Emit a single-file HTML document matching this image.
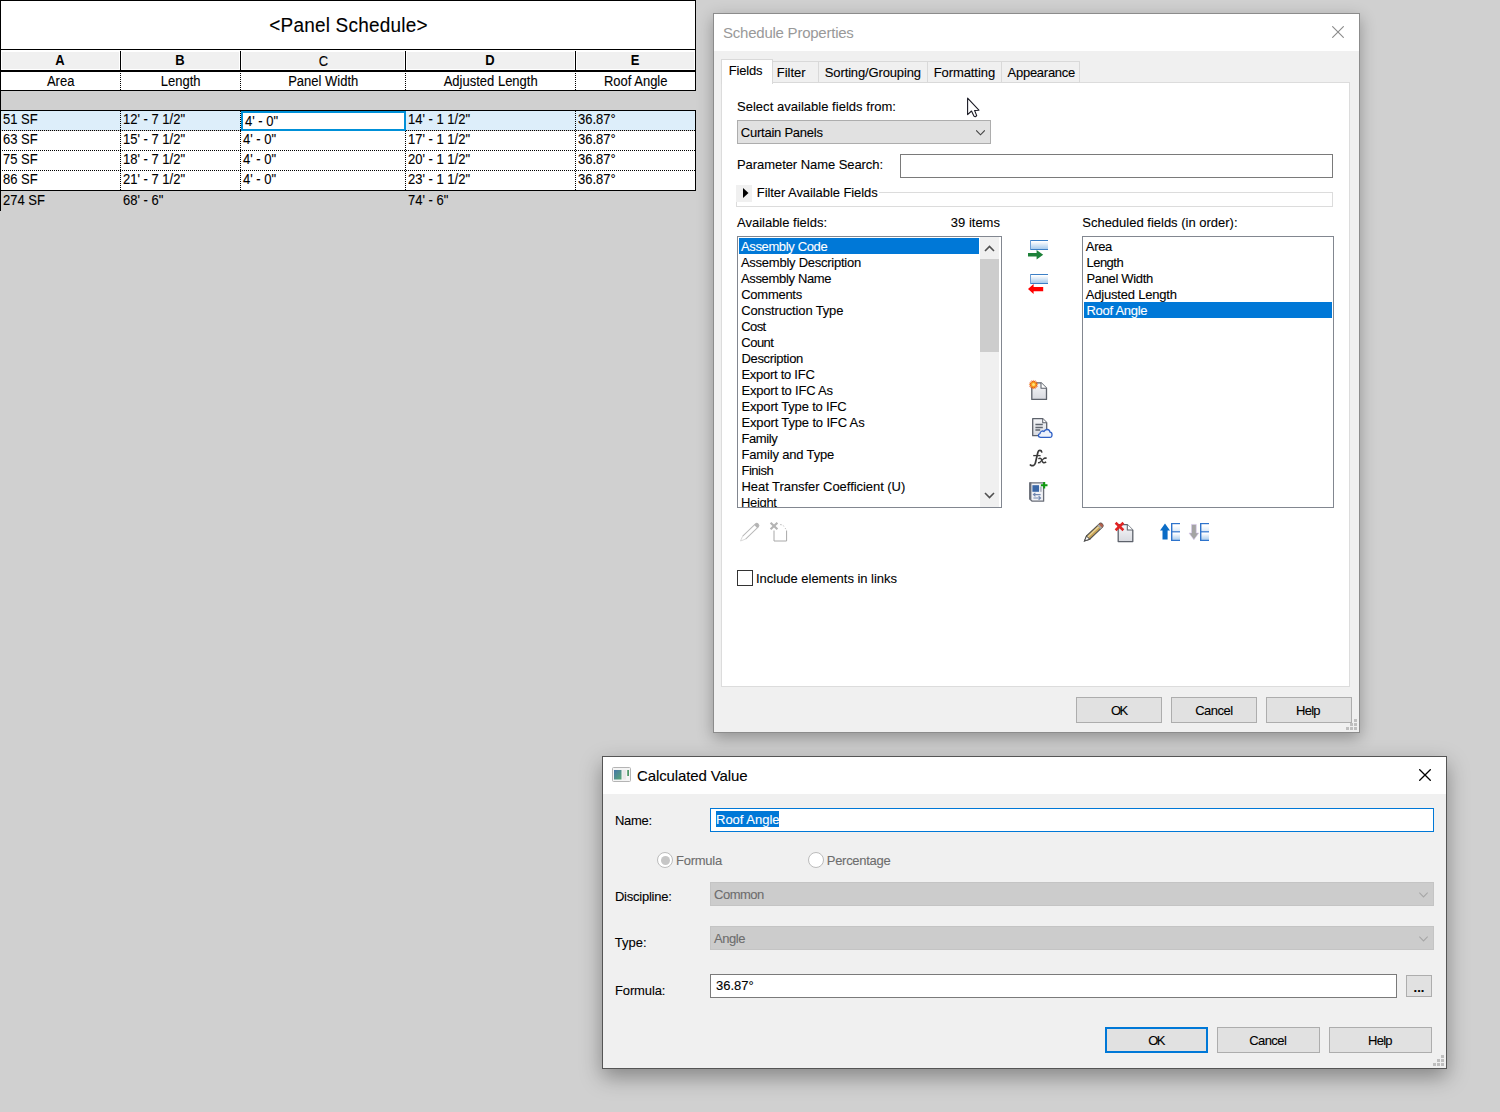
<!DOCTYPE html>
<html><head><meta charset="utf-8"><title>Schedule Properties</title>
<style>
html,body{margin:0;padding:0;}
body{width:1500px;height:1112px;overflow:hidden;background:#d0d0d0;font-family:"Liberation Sans", sans-serif;font-size:13px;position:relative;}
div,span.t,svg{position:absolute;box-sizing:border-box;}
span.t{display:block;-webkit-text-stroke:0.1px currentColor;}
</style></head>
<body>
<div style="left:0px;top:0px;width:696px;height:50px;background:#fff;border:1px solid #000;"></div>
<span class="t" style="top:15px;font-size:19px;color:#000;white-space:pre;line-height:normal;letter-spacing:0.200px;left:348.5px;transform-origin:50% 17px;transform:translateX(-50%) scaleY(1.08);">&lt;Panel Schedule&gt;</span>
<div style="left:1px;top:50px;width:695px;height:20px;background:#fff;"></div>
<div style="left:2px;top:52px;width:117px;height:17px;background:#f0f0f0;"></div>
<div style="left:122px;top:52px;width:117px;height:17px;background:#f0f0f0;"></div>
<div style="left:242px;top:52px;width:162px;height:17px;background:#f0f0f0;"></div>
<div style="left:407px;top:52px;width:167px;height:17px;background:#f0f0f0;"></div>
<div style="left:577px;top:52px;width:117px;height:17px;background:#f0f0f0;"></div>
<div style="left:120px;top:51px;width:1px;height:19px;background:#000;"></div>
<div style="left:240px;top:51px;width:1px;height:19px;background:#000;"></div>
<div style="left:405px;top:51px;width:1px;height:19px;background:#000;"></div>
<div style="left:575px;top:51px;width:1px;height:19px;background:#000;"></div>
<div style="left:695px;top:51px;width:1px;height:19px;background:#000;"></div>
<div style="left:0px;top:70px;width:696px;height:2px;background:#000;"></div>
<div style="left:1px;top:72px;width:694px;height:18px;background:#fff;"></div>
<div style="left:120px;top:73px;width:1px;height:17px;background:repeating-linear-gradient(180deg,#000 0 1px,transparent 1px 2px);background-position:0 0px;"></div>
<div style="left:240px;top:73px;width:1px;height:17px;background:repeating-linear-gradient(180deg,#000 0 1px,transparent 1px 2px);background-position:0 0px;"></div>
<div style="left:405px;top:73px;width:1px;height:17px;background:repeating-linear-gradient(180deg,#000 0 1px,transparent 1px 2px);background-position:0 0px;"></div>
<div style="left:575px;top:73px;width:1px;height:17px;background:repeating-linear-gradient(180deg,#000 0 1px,transparent 1px 2px);background-position:0 0px;"></div>
<div style="left:695px;top:50px;width:1px;height:41px;background:#000;"></div>
<div style="left:0px;top:90px;width:696px;height:1px;background:#000;"></div>
<div style="left:0px;top:110px;width:696px;height:1px;background:#000;"></div>
<div style="left:1px;top:111px;width:694px;height:19px;background:#ddeefa;"></div>
<div style="left:1px;top:131px;width:694px;height:59px;background:#fff;"></div>
<div style="left:2px;top:130px;width:693px;height:1px;background:repeating-linear-gradient(90deg,#000 0 1px,transparent 1px 2px);background-position:0px 0;"></div>
<div style="left:2px;top:150px;width:693px;height:1px;background:repeating-linear-gradient(90deg,#000 0 1px,transparent 1px 2px);background-position:0px 0;"></div>
<div style="left:2px;top:170px;width:693px;height:1px;background:repeating-linear-gradient(90deg,#000 0 1px,transparent 1px 2px);background-position:0px 0;"></div>
<div style="left:120px;top:111px;width:1px;height:79px;background:repeating-linear-gradient(180deg,#000 0 1px,transparent 1px 2px);background-position:0 0px;"></div>
<div style="left:240px;top:111px;width:1px;height:79px;background:repeating-linear-gradient(180deg,#000 0 1px,transparent 1px 2px);background-position:0 0px;"></div>
<div style="left:405px;top:111px;width:1px;height:79px;background:repeating-linear-gradient(180deg,#000 0 1px,transparent 1px 2px);background-position:0 0px;"></div>
<div style="left:575px;top:111px;width:1px;height:79px;background:repeating-linear-gradient(180deg,#000 0 1px,transparent 1px 2px);background-position:0 0px;"></div>
<div style="left:0px;top:190px;width:696px;height:1px;background:#000;"></div>
<div style="left:695px;top:110px;width:1px;height:81px;background:#000;"></div>
<div style="left:0px;top:0px;width:1px;height:211px;background:#000;"></div>
<div style="left:241px;top:111px;width:165px;height:20px;background:#fff;border:2px solid #0090d8;"></div>
<span class="t" style="top:53px;font-size:13px;color:#000;white-space:pre;line-height:normal;font-weight:bold;left:60.0px;transform-origin:50% 12px;transform:translateX(-50%) scaleY(1.08);-webkit-text-stroke:0;">A</span>
<span class="t" style="top:74px;font-size:13px;color:#000;white-space:pre;line-height:normal;left:60.7px;transform-origin:50% 12px;transform:translateX(-50%) scaleY(1.08);">Area</span>
<span class="t" style="top:53px;font-size:13px;color:#000;white-space:pre;line-height:normal;font-weight:bold;left:180.0px;transform-origin:50% 12px;transform:translateX(-50%) scaleY(1.08);-webkit-text-stroke:0;">B</span>
<span class="t" style="top:74px;font-size:13px;color:#000;white-space:pre;line-height:normal;left:180.7px;transform-origin:50% 12px;transform:translateX(-50%) scaleY(1.08);">Length</span>
<span class="t" style="top:54px;font-size:13px;color:#000;white-space:pre;line-height:normal;left:323.5px;transform-origin:50% 12px;transform:translateX(-50%) scaleY(1.08);">C</span>
<span class="t" style="top:74px;font-size:13px;color:#000;white-space:pre;line-height:normal;left:323.2px;transform-origin:50% 12px;transform:translateX(-50%) scaleY(1.08);">Panel Width</span>
<span class="t" style="top:53px;font-size:13px;color:#000;white-space:pre;line-height:normal;font-weight:bold;left:490.0px;transform-origin:50% 12px;transform:translateX(-50%) scaleY(1.08);-webkit-text-stroke:0;">D</span>
<span class="t" style="top:74px;font-size:13px;color:#000;white-space:pre;line-height:normal;left:490.7px;transform-origin:50% 12px;transform:translateX(-50%) scaleY(1.08);">Adjusted Length</span>
<span class="t" style="top:53px;font-size:13px;color:#000;white-space:pre;line-height:normal;font-weight:bold;left:635.0px;transform-origin:50% 12px;transform:translateX(-50%) scaleY(1.08);-webkit-text-stroke:0;">E</span>
<span class="t" style="top:74px;font-size:13px;color:#000;white-space:pre;line-height:normal;left:635.7px;transform-origin:50% 12px;transform:translateX(-50%) scaleY(1.08);">Roof Angle</span>
<span class="t" style="top:112px;font-size:13px;color:#000;white-space:pre;line-height:normal;left:3px;transform-origin:50% 12px;transform:scaleY(1.09);">51 SF</span>
<span class="t" style="top:112px;font-size:13px;color:#000;white-space:pre;line-height:normal;left:123px;transform-origin:50% 12px;transform:scaleY(1.09);">12' - 7 1/2"</span>
<span class="t" style="top:114px;font-size:13px;color:#000;white-space:pre;line-height:normal;left:245px;transform-origin:50% 12px;transform:scaleY(1.09);">4' - 0"</span>
<span class="t" style="top:112px;font-size:13px;color:#000;white-space:pre;line-height:normal;left:408px;transform-origin:50% 12px;transform:scaleY(1.09);">14' - 1 1/2"</span>
<span class="t" style="top:112px;font-size:13px;color:#000;white-space:pre;line-height:normal;left:578px;transform-origin:50% 12px;transform:scaleY(1.09);">36.87°</span>
<span class="t" style="top:132px;font-size:13px;color:#000;white-space:pre;line-height:normal;left:3px;transform-origin:50% 12px;transform:scaleY(1.09);">63 SF</span>
<span class="t" style="top:132px;font-size:13px;color:#000;white-space:pre;line-height:normal;left:123px;transform-origin:50% 12px;transform:scaleY(1.09);">15' - 7 1/2"</span>
<span class="t" style="top:132px;font-size:13px;color:#000;white-space:pre;line-height:normal;left:243px;transform-origin:50% 12px;transform:scaleY(1.09);">4' - 0"</span>
<span class="t" style="top:132px;font-size:13px;color:#000;white-space:pre;line-height:normal;left:408px;transform-origin:50% 12px;transform:scaleY(1.09);">17' - 1 1/2"</span>
<span class="t" style="top:132px;font-size:13px;color:#000;white-space:pre;line-height:normal;left:578px;transform-origin:50% 12px;transform:scaleY(1.09);">36.87°</span>
<span class="t" style="top:152px;font-size:13px;color:#000;white-space:pre;line-height:normal;left:3px;transform-origin:50% 12px;transform:scaleY(1.09);">75 SF</span>
<span class="t" style="top:152px;font-size:13px;color:#000;white-space:pre;line-height:normal;left:123px;transform-origin:50% 12px;transform:scaleY(1.09);">18' - 7 1/2"</span>
<span class="t" style="top:152px;font-size:13px;color:#000;white-space:pre;line-height:normal;left:243px;transform-origin:50% 12px;transform:scaleY(1.09);">4' - 0"</span>
<span class="t" style="top:152px;font-size:13px;color:#000;white-space:pre;line-height:normal;left:408px;transform-origin:50% 12px;transform:scaleY(1.09);">20' - 1 1/2"</span>
<span class="t" style="top:152px;font-size:13px;color:#000;white-space:pre;line-height:normal;left:578px;transform-origin:50% 12px;transform:scaleY(1.09);">36.87°</span>
<span class="t" style="top:172px;font-size:13px;color:#000;white-space:pre;line-height:normal;left:3px;transform-origin:50% 12px;transform:scaleY(1.09);">86 SF</span>
<span class="t" style="top:172px;font-size:13px;color:#000;white-space:pre;line-height:normal;left:123px;transform-origin:50% 12px;transform:scaleY(1.09);">21' - 7 1/2"</span>
<span class="t" style="top:172px;font-size:13px;color:#000;white-space:pre;line-height:normal;left:243px;transform-origin:50% 12px;transform:scaleY(1.09);">4' - 0"</span>
<span class="t" style="top:172px;font-size:13px;color:#000;white-space:pre;line-height:normal;left:408px;transform-origin:50% 12px;transform:scaleY(1.09);">23' - 1 1/2"</span>
<span class="t" style="top:172px;font-size:13px;color:#000;white-space:pre;line-height:normal;left:578px;transform-origin:50% 12px;transform:scaleY(1.09);">36.87°</span>
<span class="t" style="top:193px;font-size:13px;color:#000;white-space:pre;line-height:normal;left:3px;transform-origin:50% 12px;transform:scaleY(1.09);">274 SF</span>
<span class="t" style="top:193px;font-size:13px;color:#000;white-space:pre;line-height:normal;left:123px;transform-origin:50% 12px;transform:scaleY(1.09);">68' - 6"</span>
<span class="t" style="top:193px;font-size:13px;color:#000;white-space:pre;line-height:normal;left:408px;transform-origin:50% 12px;transform:scaleY(1.09);">74' - 6"</span>
<div style="left:713px;top:13px;width:647px;height:720px;background:#f0f0f0;border:1px solid #8c8c8c;box-shadow:0 5px 15px 0 rgba(0,0,0,.30);"></div>
<div style="left:714px;top:14px;width:645px;height:37px;background:#fff;"></div>
<span class="t" style="top:24px;font-size:15px;color:#999999;white-space:pre;line-height:normal;letter-spacing:-0.239px;left:723.05px;-webkit-text-stroke:0;">Schedule Properties</span>
<svg style="left:1332px;top:26px;width:12px;height:12px" viewBox="0 0 12 12"><path d="M0.3 0.3L11.7 11.7M11.7 0.3L0.3 11.7" stroke="#8a8a8a" stroke-width="1.1" fill="none"/></svg>
<div style="left:721px;top:82px;width:629px;height:605px;background:#fff;border:1px solid #dcdcdc;"></div>
<div style="left:772px;top:61px;width:47px;height:22px;background:#f0f0f0;border:1px solid #d9d9d9;"></div>
<span class="t" style="top:65px;font-size:13px;color:#000;white-space:pre;line-height:normal;letter-spacing:-0.046px;left:776.85px;">Filter</span>
<div style="left:818px;top:61px;width:110px;height:22px;background:#f0f0f0;border:1px solid #d9d9d9;"></div>
<span class="t" style="top:65px;font-size:13px;color:#000;white-space:pre;line-height:normal;letter-spacing:-0.140px;left:824.85px;">Sorting/Grouping</span>
<div style="left:927px;top:61px;width:75px;height:22px;background:#f0f0f0;border:1px solid #d9d9d9;"></div>
<span class="t" style="top:65px;font-size:13px;color:#000;white-space:pre;line-height:normal;letter-spacing:-0.073px;left:933.65px;">Formatting</span>
<div style="left:1001px;top:61px;width:79px;height:22px;background:#f0f0f0;border:1px solid #d9d9d9;"></div>
<span class="t" style="top:65px;font-size:13px;color:#000;white-space:pre;line-height:normal;letter-spacing:-0.263px;left:1007.55px;">Appearance</span>
<div style="left:721px;top:59px;width:52px;height:25px;background:#fff;border:1px solid #d9d9d9;border-bottom:none;"></div>
<span class="t" style="top:63px;font-size:13px;color:#000;white-space:pre;line-height:normal;letter-spacing:-0.205px;left:728.85px;">Fields</span>
<span class="t" style="top:99px;font-size:13px;color:#000;white-space:pre;line-height:normal;letter-spacing:0.026px;left:737px;">Select available fields from:</span>
<div style="left:737px;top:120px;width:254px;height:24px;background:#e1e1e1;border:1px solid #adadad;"></div>
<span class="t" style="top:125px;font-size:13px;color:#000;white-space:pre;line-height:normal;letter-spacing:-0.240px;left:740.85px;">Curtain Panels</span>
<svg style="left:976px;top:130px;width:9px;height:6px" viewBox="0 0 9 6"><path d="M0.2 0.4L4.5 4.8L8.8 0.4" stroke="#444" stroke-width="1.1" fill="none"/></svg>
<span class="t" style="top:157px;font-size:13px;color:#000;white-space:pre;line-height:normal;letter-spacing:-0.064px;left:737px;">Parameter Name Search:</span>
<div style="left:900px;top:154px;width:433px;height:24px;background:#fff;border:1px solid #7a7a7a;"></div>
<div style="left:736px;top:192px;width:597px;height:15px;border:1px solid #dcdcdc;"></div>
<div style="left:736px;top:185px;width:16px;height:17px;background:#f0f0f0;"></div>
<div style="left:752px;top:185px;width:127px;height:17px;background:#fff;"></div>
<svg style="left:743px;top:188px;width:6px;height:10px" viewBox="0 0 6 10"><path d="M0 0L5.5 5L0 10Z" fill="#000"/></svg>
<span class="t" style="top:185px;font-size:13px;color:#000;white-space:pre;line-height:normal;letter-spacing:-0.079px;left:756.85px;">Filter Available Fields</span>
<span class="t" style="top:215px;font-size:13px;color:#000;white-space:pre;line-height:normal;letter-spacing:-0.006px;left:737px;">Available fields:</span>
<span class="t" style="top:215px;font-size:13px;color:#000;white-space:pre;line-height:normal;letter-spacing:-0.004px;left:950.85px;">39 items</span>
<span class="t" style="top:215px;font-size:13px;color:#000;white-space:pre;line-height:normal;letter-spacing:-0.002px;left:1082.25px;">Scheduled fields (in order):</span>
<div style="left:737px;top:236px;width:265px;height:272px;background:#fff;border:1px solid #828790;overflow:hidden;"></div>
<div style="left:739px;top:238px;width:240px;height:16px;background:#0078d7;"></div>
<span class="t" style="top:239px;font-size:13px;color:#fff;white-space:pre;line-height:normal;letter-spacing:-0.362px;left:740.95px;">Assembly Code</span>
<span class="t" style="top:255px;font-size:13px;color:#000;white-space:pre;line-height:normal;letter-spacing:-0.250px;left:740.95px;">Assembly Description</span>
<span class="t" style="top:271px;font-size:13px;color:#000;white-space:pre;line-height:normal;letter-spacing:-0.333px;left:740.95px;">Assembly Name</span>
<span class="t" style="top:287px;font-size:13px;color:#000;white-space:pre;line-height:normal;letter-spacing:-0.273px;left:741.25px;">Comments</span>
<span class="t" style="top:303px;font-size:13px;color:#000;white-space:pre;line-height:normal;letter-spacing:-0.147px;left:741.25px;">Construction Type</span>
<span class="t" style="top:319px;font-size:13px;color:#000;white-space:pre;line-height:normal;letter-spacing:-0.613px;left:741.25px;">Cost</span>
<span class="t" style="top:335px;font-size:13px;color:#000;white-space:pre;line-height:normal;letter-spacing:-0.492px;left:741.25px;">Count</span>
<span class="t" style="top:351px;font-size:13px;color:#000;white-space:pre;line-height:normal;letter-spacing:-0.318px;left:741.45px;">Description</span>
<span class="t" style="top:367px;font-size:13px;color:#000;white-space:pre;line-height:normal;letter-spacing:-0.271px;left:741.45px;">Export to IFC</span>
<span class="t" style="top:383px;font-size:13px;color:#000;white-space:pre;line-height:normal;letter-spacing:-0.202px;left:741.45px;">Export to IFC As</span>
<span class="t" style="top:399px;font-size:13px;color:#000;white-space:pre;line-height:normal;letter-spacing:-0.168px;left:741.45px;">Export Type to IFC</span>
<span class="t" style="top:415px;font-size:13px;color:#000;white-space:pre;line-height:normal;letter-spacing:-0.150px;left:741.45px;">Export Type to IFC As</span>
<span class="t" style="top:431px;font-size:13px;color:#000;white-space:pre;line-height:normal;letter-spacing:-0.409px;left:741.45px;">Family</span>
<span class="t" style="top:447px;font-size:13px;color:#000;white-space:pre;line-height:normal;letter-spacing:-0.161px;left:741.45px;">Family and Type</span>
<span class="t" style="top:463px;font-size:13px;color:#000;white-space:pre;line-height:normal;letter-spacing:-0.472px;left:741.45px;">Finish</span>
<span class="t" style="top:479px;font-size:13px;color:#000;white-space:pre;line-height:normal;letter-spacing:-0.050px;left:741.45px;">Heat Transfer Coefficient (U)</span>
<div style="left:739px;top:494px;width:120px;height:13px;overflow:hidden;"><span style="position:absolute;left:2px;top:1px;font-size:13px;line-height:normal;white-space:pre;letter-spacing:-0.33px;">Height</span></div>
<div style="left:980px;top:237px;width:21px;height:270px;background:#f0f0f0;"></div>
<div style="left:980px;top:259px;width:19px;height:93px;background:#cdcdcd;"></div>
<div style="left:999px;top:237px;width:2px;height:270px;background:#fff;"></div>
<svg style="left:984px;top:245px;width:11px;height:7px" viewBox="0 0 11 7"><path d="M1 6L5.5 1.5L10 6" stroke="#505050" stroke-width="1.6" fill="none"/></svg>
<svg style="left:984px;top:492px;width:11px;height:7px" viewBox="0 0 11 7"><path d="M1 1L5.5 5.5L10 1" stroke="#505050" stroke-width="1.6" fill="none"/></svg>
<div style="left:1082px;top:236px;width:252px;height:272px;background:#fff;border:1px solid #828790;"></div>
<div style="left:1084px;top:302px;width:248px;height:16px;background:#0078d7;"></div>
<span class="t" style="top:239px;font-size:13px;color:#000;white-space:pre;line-height:normal;letter-spacing:-0.351px;left:1085.85px;">Area</span>
<span class="t" style="top:255px;font-size:13px;color:#000;white-space:pre;line-height:normal;letter-spacing:-0.509px;left:1086.45px;">Length</span>
<span class="t" style="top:271px;font-size:13px;color:#000;white-space:pre;line-height:normal;letter-spacing:-0.330px;left:1086.45px;">Panel Width</span>
<span class="t" style="top:287px;font-size:13px;color:#000;white-space:pre;line-height:normal;letter-spacing:-0.200px;left:1085.85px;">Adjusted Length</span>
<span class="t" style="top:303px;font-size:13px;color:#fff;white-space:pre;line-height:normal;letter-spacing:-0.283px;left:1086.45px;">Roof Angle</span>
<div style="left:737px;top:570px;width:16px;height:16px;background:#fff;border:1px solid #333;"></div>
<span class="t" style="top:571px;font-size:13px;color:#000;white-space:pre;line-height:normal;letter-spacing:-0.026px;left:756px;">Include elements in links</span>
<div style="left:1076px;top:697px;width:86px;height:26px;background:#e1e1e1;border:1px solid #adadad;"></div>
<span class="t" style="top:703px;font-size:13px;color:#000;white-space:pre;line-height:normal;letter-spacing:-1.582px;left:1110.95px;">OK</span>
<div style="left:1171px;top:697px;width:86px;height:26px;background:#e1e1e1;border:1px solid #adadad;"></div>
<span class="t" style="top:703px;font-size:13px;color:#000;white-space:pre;line-height:normal;letter-spacing:-0.517px;left:1195.15px;">Cancel</span>
<div style="left:1266px;top:697px;width:86px;height:26px;background:#e1e1e1;border:1px solid #adadad;"></div>
<span class="t" style="top:703px;font-size:13px;color:#000;white-space:pre;line-height:normal;letter-spacing:-0.690px;left:1295.95px;">Help</span>
<div style="left:602px;top:756px;width:845px;height:313px;background:#f0f0f0;border:1px solid #555;box-shadow:0 8px 20px 0 rgba(0,0,0,.36);"></div>
<div style="left:603px;top:757px;width:843px;height:37px;background:#fff;"></div>
<span class="t" style="top:767px;font-size:15px;color:#000;white-space:pre;line-height:normal;letter-spacing:-0.112px;left:637px;">Calculated Value</span>
<svg style="left:1419px;top:769px;width:12px;height:12px" viewBox="0 0 12 12"><path d="M0.3 0.3L11.7 11.7M11.7 0.3L0.3 11.7" stroke="#000" stroke-width="1.3" fill="none"/></svg>
<svg style="left:612px;top:767px;width:19px;height:15px" viewBox="0 0 19 15"><defs><linearGradient id="gi" x1="0" y1="0" x2="1" y2="1"><stop offset="0" stop-color="#4676a8"/><stop offset="1" stop-color="#56a873"/></linearGradient></defs><rect x="0.5" y="0.5" width="18" height="14" rx="1" fill="#f4f4f4" stroke="#b4b4b4"/><rect x="2" y="3" width="7.5" height="9.5" fill="url(#gi)"/><rect x="10.5" y="3" width="3.5" height="9.5" fill="#e8e8e8"/><rect x="15.3" y="3" width="1.6" height="6" fill="#3f8f5a"/></svg>
<span class="t" style="top:813px;font-size:13px;color:#000;white-space:pre;line-height:normal;letter-spacing:-0.271px;left:614.95px;">Name:</span>
<div style="left:710px;top:808px;width:724px;height:24px;background:#fff;border:1px solid #0078d7;"></div>
<div style="left:716px;top:811px;width:63px;height:16px;background:#0078d7;"></div>
<span class="t" style="top:812px;font-size:13px;color:#fff;white-space:pre;line-height:normal;letter-spacing:-0.011px;left:716px;">Roof Angle</span>
<div style="left:657px;top:852px;width:16px;height:16px;border-radius:50%;background:#fff;border:1px solid #bcbcbc;"><div style="left:2.5px;top:2.5px;width:9px;height:9px;border-radius:50%;background:#c6c6c6;"></div></div>
<span class="t" style="top:853px;font-size:13px;color:#6d6d6d;white-space:pre;line-height:normal;letter-spacing:-0.251px;left:676.05px;">Formula</span>
<div style="left:808px;top:852px;width:16px;height:16px;border-radius:50%;background:#fff;border:1px solid #bcbcbc;"></div>
<span class="t" style="top:853px;font-size:13px;color:#6d6d6d;white-space:pre;line-height:normal;letter-spacing:-0.280px;left:826.75px;">Percentage</span>
<span class="t" style="top:889px;font-size:13px;color:#000;white-space:pre;line-height:normal;letter-spacing:-0.232px;left:614.95px;">Discipline:</span>
<div style="left:710px;top:882px;width:724px;height:24px;background:#cccccc;border:1px solid #c4c4c4;"></div>
<span class="t" style="top:887px;font-size:13px;color:#6d6d6d;white-space:pre;line-height:normal;letter-spacing:-0.493px;left:714.05px;">Common</span>
<span class="t" style="top:935px;font-size:13px;color:#000;white-space:pre;line-height:normal;letter-spacing:-0.010px;left:614.75px;">Type:</span>
<div style="left:710px;top:926px;width:724px;height:24px;background:#cccccc;border:1px solid #c4c4c4;"></div>
<span class="t" style="top:931px;font-size:13px;color:#6d6d6d;white-space:pre;line-height:normal;letter-spacing:-0.450px;left:713.95px;">Angle</span>
<svg style="left:1419px;top:892px;width:9px;height:6px" viewBox="0 0 9 6"><path d="M0.3 0.6L4.5 4.9L8.7 0.6" stroke="#a6a6a6" stroke-width="1.1" fill="none"/></svg>
<svg style="left:1419px;top:936px;width:9px;height:6px" viewBox="0 0 9 6"><path d="M0.3 0.6L4.5 4.9L8.7 0.6" stroke="#a6a6a6" stroke-width="1.1" fill="none"/></svg>
<span class="t" style="top:983px;font-size:13px;color:#000;white-space:pre;line-height:normal;letter-spacing:-0.107px;left:614.95px;">Formula:</span>
<div style="left:710px;top:974px;width:687px;height:24px;background:#fff;border:1px solid #7a7a7a;"></div>
<span class="t" style="top:978px;font-size:13px;color:#000;white-space:pre;line-height:normal;left:716px;">36.87°</span>
<div style="left:1406px;top:975px;width:26px;height:22px;background:#e1e1e1;border:1px solid #adadad;"></div>
<span class="t" style="top:980px;font-size:13px;color:#000;white-space:pre;line-height:normal;font-weight:bold;left:1419px;transform:translateX(-50%);">...</span>
<div style="left:1105px;top:1027px;width:103px;height:26px;background:#e1e1e1;border:2px solid #0078d7;"></div>
<span class="t" style="top:1033px;font-size:13px;color:#000;white-space:pre;line-height:normal;letter-spacing:-1.682px;left:1148.35px;">OK</span>
<div style="left:1217px;top:1027px;width:103px;height:26px;background:#e1e1e1;border:1px solid #adadad;"></div>
<span class="t" style="top:1033px;font-size:13px;color:#000;white-space:pre;line-height:normal;letter-spacing:-0.550px;left:1249.15px;">Cancel</span>
<div style="left:1329px;top:1027px;width:103px;height:26px;background:#e1e1e1;border:1px solid #adadad;"></div>
<span class="t" style="top:1033px;font-size:13px;color:#000;white-space:pre;line-height:normal;letter-spacing:-0.690px;left:1367.95px;">Help</span>
<div style="left:1441px;top:1055px;width:3px;height:3px;background:#bfbfbf;"></div>
<div style="left:1437px;top:1059px;width:3px;height:3px;background:#bfbfbf;"></div>
<div style="left:1441px;top:1059px;width:3px;height:3px;background:#bfbfbf;"></div>
<div style="left:1433px;top:1063px;width:3px;height:3px;background:#bfbfbf;"></div>
<div style="left:1437px;top:1063px;width:3px;height:3px;background:#bfbfbf;"></div>
<div style="left:1441px;top:1063px;width:3px;height:3px;background:#bfbfbf;"></div>
<div style="left:1354px;top:719px;width:3px;height:3px;background:#bfbfbf;"></div>
<div style="left:1350px;top:723px;width:3px;height:3px;background:#bfbfbf;"></div>
<div style="left:1354px;top:723px;width:3px;height:3px;background:#bfbfbf;"></div>
<div style="left:1346px;top:727px;width:3px;height:3px;background:#bfbfbf;"></div>
<div style="left:1350px;top:727px;width:3px;height:3px;background:#bfbfbf;"></div>
<div style="left:1354px;top:727px;width:3px;height:3px;background:#bfbfbf;"></div>
<svg style="left:0px;top:0px;width:1px;height:1px;overflow:visible;" viewBox="0 0 1 1"><defs><linearGradient id="gb" x1="0" y1="0" x2="0" y2="1"><stop offset="0.15" stop-color="#ffffff"/><stop offset="1" stop-color="#9cc4ea"/></linearGradient><linearGradient id="gp" x1="0" y1="0" x2="0" y2="1"><stop offset="0" stop-color="#f6f7f9"/><stop offset="1" stop-color="#d8dae0"/></linearGradient></defs></svg>
<svg style="left:1030px;top:240px;width:18px;height:10px;overflow:visible;" viewBox="0 0 18 10"><rect x="0" y="0" width="18" height="10" fill="url(#gb)"/><rect x="0" y="0" width="18" height="1" fill="#3b7fc6"/><rect x="0" y="9" width="18" height="1" fill="#3b7fc6"/><rect x="0" y="0" width="1" height="10" fill="#6d9fd6"/></svg>
<svg style="left:1028px;top:250px;width:16px;height:10px;overflow:visible;" viewBox="0 0 16 10"><path d="M0 2.9H8.6V0L15.2 4.7L8.6 9.6V6.5H0Z" fill="#1d8139"/></svg>
<svg style="left:1030px;top:274px;width:18px;height:10px;overflow:visible;" viewBox="0 0 18 10"><rect x="0" y="0" width="18" height="10" fill="url(#gb)"/><rect x="0" y="0" width="18" height="1" fill="#3b7fc6"/><rect x="0" y="9" width="18" height="1" fill="#3b7fc6"/><rect x="0" y="0" width="1" height="10" fill="#6d9fd6"/></svg>
<svg style="left:1028px;top:284px;width:16px;height:10px;overflow:visible;" viewBox="0 0 16 10"><path d="M15.2 2.9H5.6V0L0 5L5.6 10V7.2H15.2Z" fill="#ff0000"/></svg>
<svg style="left:1028px;top:379px;width:21px;height:22px;overflow:visible;" viewBox="0 0 21 22"><path d="M3.8 3.8H13.0L18.5 9.3V20.400000000000002H3.8Z" fill="url(#gp)" stroke="#5d626b" stroke-width="1.3" stroke-linejoin="round"/><path d="M13.0 3.8V9.3H18.5" fill="#fff" stroke="#5d626b" stroke-width="1.04" stroke-linejoin="round"/><g transform="translate(0.9,1.0)"><polygon points="9.22,6.51 6.44,6.44 6.51,9.22 4.60,7.20 2.69,9.22 2.76,6.44 -0.02,6.51 2.00,4.60 -0.02,2.69 2.76,2.76 2.69,-0.02 4.60,2.00 6.51,-0.02 6.44,2.76 9.22,2.69 7.20,4.60" fill="#e2421c"/><polygon points="9.40,4.60 7.00,5.59 7.99,7.99 5.59,7.00 4.60,9.40 3.61,7.00 1.21,7.99 2.20,5.59 -0.20,4.60 2.20,3.61 1.21,1.21 3.61,2.20 4.60,-0.20 5.59,2.20 7.99,1.21 7.00,3.61" fill="#f28a18"/><circle cx="4.6" cy="4.6" r="2.7" fill="#f59a20"/><circle cx="4.6" cy="4.6" r="1.5" fill="#ffe27a"/></g></svg>
<svg style="left:1032px;top:418px;width:21px;height:20px;overflow:visible;" viewBox="0 0 21 20"><path d="M0.7 0.7H10.7L14.7 4.7V17.7H0.7Z" fill="url(#gp)" stroke="#5d626b" stroke-width="1.3" stroke-linejoin="round"/><path d="M10.7 0.7V4.7H14.7" fill="#fff" stroke="#5d626b" stroke-width="1.04" stroke-linejoin="round"/><path d="M3.4 6.4H10.8M3.4 9.5H10.8M3.4 12.1H8.2" stroke="#5f666f" stroke-width="1.5"/><path d="M8.6 19.3 C5.8 19.3 5.6 16.0 8.0 15.6 C8.0 13.2 10.8 12.4 12.0 13.6 C13.2 10.6 17.6 10.8 18.0 14.2 C20.6 14.2 20.8 19.3 18.0 19.3 Z" fill="#eef2fb" stroke="#2f60c6" stroke-width="1.3" stroke-linejoin="round"/></svg>
<svg style="left:1029px;top:449px;width:19px;height:18px;overflow:visible;" viewBox="0 0 19 18"><path d="M12.7 3.0C12.4 0.9 9.6 0.7 8.9 3.2L6.3 14.2C5.8 16.6 3.6 17.4 1.4 16.0" fill="none" stroke="#3a3a3a" stroke-width="1.7" stroke-linecap="round"/><path d="M4.2 6.6H11.6" stroke="#3a3a3a" stroke-width="1.3"/><path d="M9.4 9.8C11.0 8.8 12.2 9.2 12.8 11.3C13.3 13.6 14.6 14.3 17.2 13.0" fill="none" stroke="#3a3a3a" stroke-width="1.5"/><path d="M17.4 9.2C15.2 8.8 14.0 10.0 12.8 11.3C11.5 12.8 10.7 14.2 9.0 13.6" fill="none" stroke="#3a3a3a" stroke-width="1.2"/><path d="M9.0 13.7H11.4M14.8 9.2H17.6" stroke="#3a3a3a" stroke-width="1.2"/></svg>
<svg style="left:1029px;top:482px;width:19px;height:20px;overflow:visible;" viewBox="0 0 19 20"><path d="M0.8 0.8H14.6V19.2H3.2L0.8 17Z" fill="#f1f2f6" stroke="#6a6e78" stroke-width="1.3" stroke-linejoin="round"/><rect x="0.4" y="0.4" width="2" height="17" fill="#6a6e78"/><rect x="3.4" y="3.2" width="6.6" height="6.6" fill="#3a67a6"/><rect x="10.8" y="4.6" width="2" height="5.2" fill="#b6bbc8"/><path d="M4.4 12.6H11.6M6.4 10.8L4.4 12.6L6.4 14.4" stroke="#7288b0" stroke-width="1.1" fill="none"/><path d="M4.4 16H11.6M9.6 14.2L11.6 16L9.6 17.8" stroke="#7288b0" stroke-width="1.1" fill="none"/><path d="M15.2 0V6.6M11.9 3.3H18.5" stroke="#109a10" stroke-width="2"/></svg>
<svg style="left:1084px;top:522px;width:21px;height:20px;overflow:visible;" viewBox="0 0 21 20"><g transform="translate(0.5,19) rotate(-43.5)"><path d="M0 0L5 -2.3H22.6Q24.6 -2.3 24.6 0Q24.6 2.3 22.6 2.3H5Z" fill="#c9a354" stroke="#4e4e4e" stroke-width="1"/><path d="M0 0L5 -2.3V2.3Z" fill="#fff" stroke="#4e4e4e" stroke-width="1"/><path d="M5 -0.6H20" stroke="#ead9a4" stroke-width="1.2"/><rect x="20" y="-2.3" width="2" height="4.6" fill="#a9a9a9"/><path d="M22 -2.3H22.6Q24.6 -2.3 24.6 0Q24.6 2.3 22.6 2.3H22Z" fill="#b0604e"/></g></svg>
<svg style="left:740px;top:522px;width:21px;height:20px;overflow:visible;" viewBox="0 0 21 20"><g transform="translate(0.5,19) rotate(-43.5)"><path d="M5 -2.1H22.6Q24.4 -2.1 24.4 0Q24.4 2.1 22.6 2.1H5" fill="#fff" stroke="#b9b9b9" stroke-width="1"/><path d="M0 0L5 -2.1M0 0L5 2.1" stroke="#d4d4d4" stroke-width="0.8" fill="none"/><path d="M21 -2.1H22.6Q24.4 -2.1 24.4 0Q24.4 2.1 22.6 2.1H21Z" fill="#b4b4b4"/></g></svg>
<svg style="left:1114px;top:521px;width:21px;height:22px;overflow:visible;" viewBox="0 0 21 22"><path d="M4.2 3.6H13.3L18.8 9.1V20.6H4.2Z" fill="url(#gp)" stroke="#5d626b" stroke-width="1.3" stroke-linejoin="round"/><path d="M13.3 3.6V9.1H18.8" fill="#fff" stroke="#5d626b" stroke-width="1.04" stroke-linejoin="round"/><path d="M1.6 1.8L9.4 9.2M9.4 1.8L1.6 9.2" stroke="#e02424" stroke-width="2.6"/></svg>
<svg style="left:769px;top:521px;width:21px;height:22px;overflow:visible;" viewBox="0 0 21 22"><path d="M5 9.5V20H17.6V9.5" fill="none" stroke="#a8a8a8" stroke-width="1"/><path d="M11 3.6Q14 3.6 15 5.6M16 7L17.6 9" fill="none" stroke="#c4c4c4" stroke-width="1" stroke-dasharray="1.5 1.2"/><path d="M1.6 1.8L8.4 8.2M8.4 1.8L1.6 8.2" stroke="#b4b4b4" stroke-width="2.2"/></svg>
<svg style="left:1160px;top:523px;width:10px;height:18px;overflow:visible;" viewBox="0 0 10 18"><path d="M5 0.6L10 7.4H7.6V16.6H2.5V7.4H0Z" fill="#0a6cc6"/></svg>
<svg style="left:1171px;top:523px;width:9px;height:18px;overflow:visible;" viewBox="0 0 9 18"><rect x="0" y="0" width="9" height="18" fill="url(#gb)"/><rect x="0" y="8" width="9" height="1" fill="#ffffff"/><rect x="0" y="9" width="9" height="9" fill="url(#gb)"/><rect x="0" y="0" width="9" height="1.2" fill="#2d73cc"/><rect x="0" y="8.2" width="9" height="1.2" fill="#2d73cc"/><rect x="0" y="16.8" width="9" height="1.2" fill="#2d73cc"/><rect x="0" y="0" width="1.4" height="18" fill="#2d73cc"/></svg>
<svg style="left:1189px;top:523px;width:10px;height:18px;overflow:visible;" viewBox="0 0 10 18"><path d="M2.5 1.4H7.3V10H9.8L4.9 16.8L0 10H2.5Z" fill="#a4a4a4" stroke="#d8c8f0" stroke-width="0.6"/></svg>
<svg style="left:1200px;top:523px;width:9px;height:18px;overflow:visible;" viewBox="0 0 9 18"><rect x="0" y="0" width="9" height="18" fill="url(#gb)"/><rect x="0" y="8" width="9" height="1" fill="#ffffff"/><rect x="0" y="9" width="9" height="9" fill="url(#gb)"/><rect x="0" y="0" width="9" height="1.2" fill="#2d73cc"/><rect x="0" y="8.2" width="9" height="1.2" fill="#2d73cc"/><rect x="0" y="16.8" width="9" height="1.2" fill="#2d73cc"/><rect x="0" y="0" width="1.4" height="18" fill="#2d73cc"/></svg>
<svg style="left:960px;top:92px;width:24px;height:30px;overflow:visible;" viewBox="0 0 24 30"><path d="M7.6 6.2V22.6L11.5 19L14 24.2Q15.4 25.4 16.7 23.6L14.6 18.5L18.9 18.2Z" fill="#fff" stroke="#1a1a24" stroke-width="1.1" stroke-linejoin="round"/></svg>
</body></html>
